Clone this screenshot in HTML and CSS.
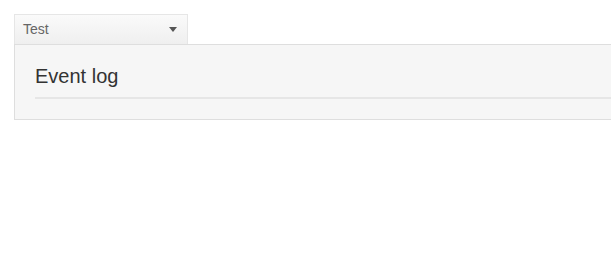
FILE: index.html
```html
<!DOCTYPE html>
<html>
<head>
<meta charset="utf-8">
<link rel="stylesheet" href="styles.css">
</head>
<body>
<div class="page">
  <div class="select">
    <span class="select-label">Test</span>
    <span class="select-arrow"></span>
  </div>
  <div class="panel">
    <h2 class="panel-title">Event log</h2>
  </div>
</div>
</body>
</html>
```
FILE: styles.css
```css
html, body {
  margin: 0;
  padding: 0;
  background: #fff;
}
.page {
  padding: 14px 0 0 14px;
  font-family: "Liberation Sans", Arial, sans-serif;
}
.select {
  box-sizing: border-box;
  width: 174px;
  height: 30px;
  border: 1px solid #e6e6e6;
  border-bottom: none;
  background: linear-gradient(#fafafa, #efefef);
  display: flex;
  align-items: center;
  justify-content: space-between;
  padding: 0 10px 1px 8px;
}
.select-label {
  font-size: 14px;
  color: #666;
  margin-bottom: 1px;
}
.select-arrow {
  width: 0;
  height: 0;
  border-left: 4px solid transparent;
  border-right: 4px solid transparent;
  border-top: 5px solid #555;
}
.panel {
  box-sizing: border-box;
  height: 76px;
  border: 1px solid #dedede;
  border-right: none;
  background: #f6f6f6;
  padding: 0 0 0 20px;
}
.panel-title {
  margin: 0;
  padding: 20px 0 10px 0;
  font-size: 20px;
  font-weight: normal;
  color: #333;
  line-height: 22px;
  border-bottom: 2px solid #e6e6e6;
}
```
